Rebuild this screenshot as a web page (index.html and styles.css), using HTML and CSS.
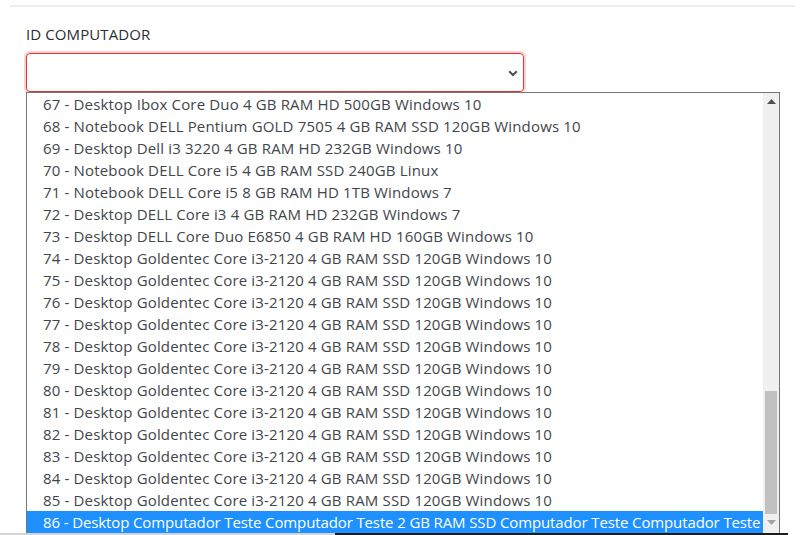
FILE: index.html
```html
<!DOCTYPE html>
<html lang="pt">
<head>
<meta charset="utf-8">
<title>ID Computador</title>
<link rel="stylesheet" href="styles.css">
</head>
<body>
<div class="page">
  <div class="rule"></div>
  <div class="field">
    <label class="label">ID COMPUTADOR</label>
    <div class="select">
      <svg class="chev" width="10" height="7" viewBox="0 0 10 7"><path d="M1.2 1.3 L5 5 L8.8 1.3" fill="none" stroke="#4a5057" stroke-width="2"/></svg>
    </div>
    <div class="listbox">
      <div class="options">
        <div class="opt">67 - Desktop Ibox Core Duo 4 GB RAM HD 500GB Windows 10</div>
        <div class="opt">68 - Notebook DELL Pentium GOLD 7505 4 GB RAM SSD 120GB Windows 10</div>
        <div class="opt">69 - Desktop Dell i3 3220 4 GB RAM HD 232GB Windows 10</div>
        <div class="opt">70 - Notebook DELL Core i5 4 GB RAM SSD 240GB Linux</div>
        <div class="opt">71 - Notebook DELL Core i5 8 GB RAM HD 1TB Windows 7</div>
        <div class="opt">72 - Desktop DELL Core i3 4 GB RAM HD 232GB Windows 7</div>
        <div class="opt">73 - Desktop DELL Core Duo E6850 4 GB RAM HD 160GB Windows 10</div>
        <div class="opt">74 - Desktop Goldentec Core i3-2120 4 GB RAM SSD 120GB Windows 10</div>
        <div class="opt">75 - Desktop Goldentec Core i3-2120 4 GB RAM SSD 120GB Windows 10</div>
        <div class="opt">76 - Desktop Goldentec Core i3-2120 4 GB RAM SSD 120GB Windows 10</div>
        <div class="opt">77 - Desktop Goldentec Core i3-2120 4 GB RAM SSD 120GB Windows 10</div>
        <div class="opt">78 - Desktop Goldentec Core i3-2120 4 GB RAM SSD 120GB Windows 10</div>
        <div class="opt">79 - Desktop Goldentec Core i3-2120 4 GB RAM SSD 120GB Windows 10</div>
        <div class="opt">80 - Desktop Goldentec Core i3-2120 4 GB RAM SSD 120GB Windows 10</div>
        <div class="opt">81 - Desktop Goldentec Core i3-2120 4 GB RAM SSD 120GB Windows 10</div>
        <div class="opt">82 - Desktop Goldentec Core i3-2120 4 GB RAM SSD 120GB Windows 10</div>
        <div class="opt">83 - Desktop Goldentec Core i3-2120 4 GB RAM SSD 120GB Windows 10</div>
        <div class="opt">84 - Desktop Goldentec Core i3-2120 4 GB RAM SSD 120GB Windows 10</div>
        <div class="opt">85 - Desktop Goldentec Core i3-2120 4 GB RAM SSD 120GB Windows 10</div>
        <div class="opt selected">86 - Desktop Computador Teste Computador Teste 2 GB RAM SSD Computador Teste Computador Teste</div>
      </div>
      <div class="scrollbar">
        <div class="arrow up"><svg width="9" height="5" viewBox="0 0 9 5"><path d="M0 5 L4.5 0 L9 5 Z" fill="#505050"/></svg></div>
        <div class="track"><div class="thumb"></div></div>
        <div class="arrow down"><svg width="9" height="5" viewBox="0 0 9 5"><path d="M0 0 L4.5 5 L9 0 Z" fill="#a3a3a3"/></svg></div>
      </div>
    </div>
    <div class="edge"><div class="edge-light"></div><div class="edge-dark"></div></div>
  </div>
</div>
</body>
</html>
```

FILE: styles.css
```css
html, body {
  margin: 0;
  padding: 0;
  background: #ffffff;
  overflow: hidden;
}
body {
  width: 801px;
  height: 535px;
  font-family: "Open Sans", "Noto Sans", sans-serif;
}
.page {
  display: flex;
  flex-direction: column;
}
.rule {
  margin: 5px 6px 0 10px;
  border-top: 2px solid #ededed;
}
.field {
  display: flex;
  flex-direction: column;
  padding-left: 26px;
  padding-top: 17px;
}
.label {
  font-size: 15px;
  line-height: 20px;
  color: #2a2e33;
  letter-spacing: 0.1px;
}
.select {
  margin-top: 9px;
  width: 498px;
  height: 39px;
  box-sizing: border-box;
  border: 1px solid #e3342f;
  border-radius: 4px;
  box-shadow: 0 0 0 2px rgba(227, 52, 47, 0.22);
  display: flex;
  align-items: center;
  justify-content: flex-end;
  padding-right: 4px;
}
.chev {
  margin-right: 1px;
  margin-top: 1px;
}
.listbox {
  width: 754px;
  box-sizing: border-box;
  border: 1px solid #767676;
  border-bottom: none;
  display: flex;
  height: 441px;
  background: #fff;
}
.options {
  flex: 1;
  overflow: hidden;
  min-width: 0;
}
.opt {
  height: 22px;
  line-height: 22px;
  padding-left: 16px;
  white-space: nowrap;
  overflow: hidden;
  font-size: 15px;
  letter-spacing: 0.16px;
  color: #41464b;
}
.opt.selected {
  background: #1e90ff;
  color: #ffffff;
  letter-spacing: -0.12px;
}
.scrollbar {
  width: 16px;
  background: #f0f0f0;
  display: flex;
  flex-direction: column;
  padding-bottom: 2px;
}
.arrow {
  height: 17px;
  display: flex;
  align-items: center;
  justify-content: center;
}
.track {
  flex: 1;
  display: flex;
  flex-direction: column;
  justify-content: flex-end;
  padding: 0 2px;
}
.thumb {
  height: 123px;
  background: #c1c1c1;
}
.edge {
  display: flex;
  height: 2px;
  margin-left: -26px;
}
.edge-light {
  width: 335px;
  background: #d4d4d4;
}
.edge-dark {
  width: 453px;
  background: #1c1c1c;
}
```
